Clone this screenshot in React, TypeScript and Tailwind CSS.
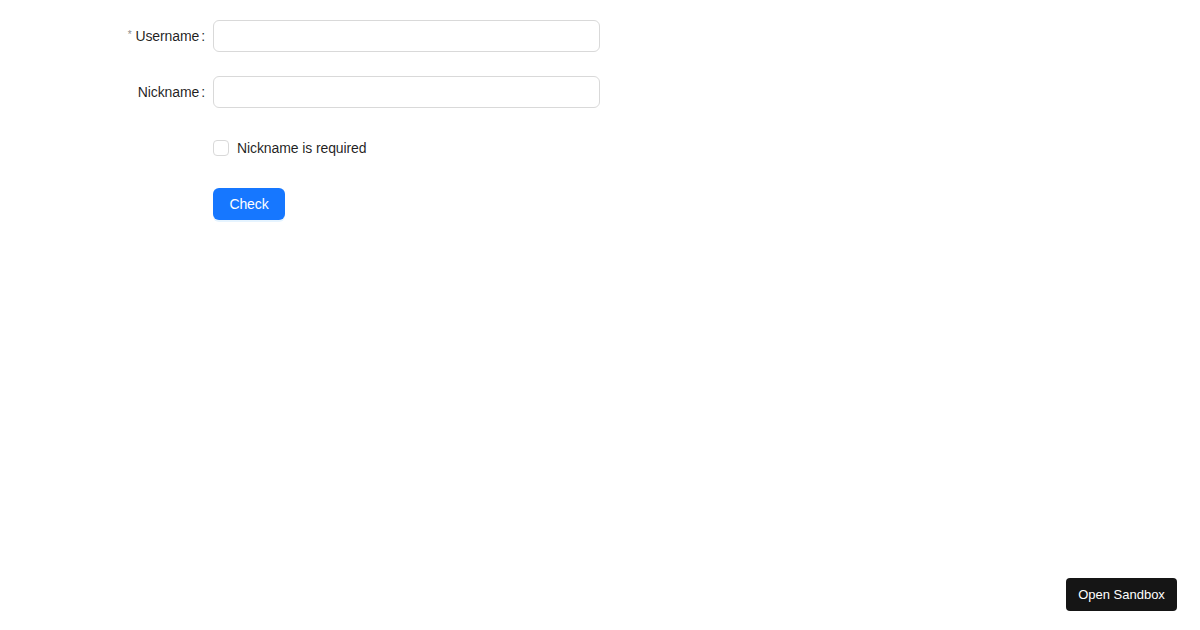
import { useState } from "react";

const font = { fontFamily: '"Liberation Sans", Arial, sans-serif' };

const App = () => {
  const [checked, setChecked] = useState(false);

  return (
    <div className="relative w-[1200px] h-[630px] bg-white text-[14px] text-[rgba(0,0,0,0.88)]" style={font}>
      <form className="flex flex-col gap-6 pt-5 pl-5 w-[600px] tracking-[-0.1px]">
        {/* Username */}
        <div className="flex h-8 items-center">
          <label className="w-[193px] shrink-0 flex justify-end items-center pr-2">
            <span className="text-[#8c8c8c] text-[10px] mr-1 -mt-1">*</span>
            <span>Username</span>
            <span className="ml-[2px]">:</span>
          </label>
          <input className="flex-1 h-8 rounded-md border border-[#d9d9d9] px-[11px] outline-none focus:border-[#4096ff]" />
        </div>

        {/* Nickname */}
        <div className="flex h-8 items-center">
          <label className="w-[193px] shrink-0 flex justify-end items-center pr-2">
            <span>Nickname</span>
            <span className="ml-[2px]">:</span>
          </label>
          <input className="flex-1 h-8 rounded-md border border-[#d9d9d9] px-[11px] outline-none focus:border-[#4096ff]" />
        </div>

        {/* Checkbox */}
        <div className="flex h-8 items-center pl-[193px]">
          <label className="flex items-center gap-2 cursor-pointer">
            <span
              onClick={() => setChecked((c) => !c)}
              className={`w-4 h-4 rounded border ${checked ? "bg-[#1677ff] border-[#1677ff]" : "bg-white border-[#d9d9d9]"}`}
            ></span>
            <span onClick={() => setChecked((c) => !c)}>Nickname is required</span>
          </label>
        </div>

        {/* Submit */}
        <div className="flex h-8 items-center pl-[193px]">
          <button type="button" className="h-8 w-[72px] rounded-md bg-[#1677ff] text-white shadow-[0_2px_0_rgba(5,145,255,0.1)]">
            Check
          </button>
        </div>
      </form>

      <button className="absolute right-[23px] bottom-[19px] w-[111px] h-[33px] rounded bg-[#151515] text-white text-[13px]">
        Open Sandbox
      </button>
    </div>
  );
};

export default App;
